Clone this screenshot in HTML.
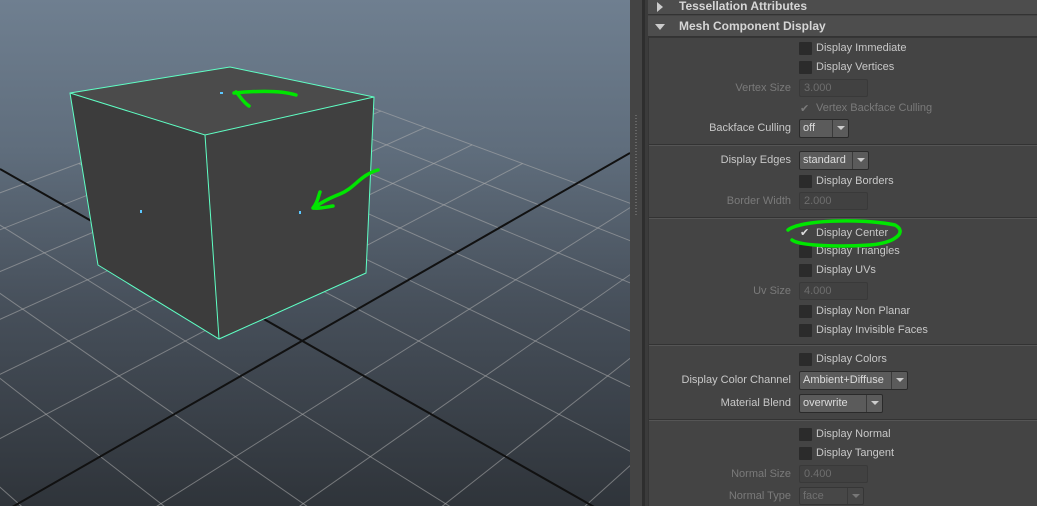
<!DOCTYPE html>
<html><head><meta charset="utf-8"><style>
*{margin:0;padding:0;box-sizing:border-box}
html,body{width:1037px;height:506px;overflow:hidden}
body{background:#444;font-family:"Liberation Sans",sans-serif;font-size:11px;position:relative}
#vp{position:absolute;left:0;top:0;width:630px;height:506px;overflow:hidden;background:linear-gradient(#6f7f90 0%,#5f6d7c 30%,#47505b 60%,#2f343a 100%)}
#strip{position:absolute;left:630px;top:0;width:12px;height:506px;background:#444}
#dl{position:absolute;left:642px;top:0;width:3px;height:506px;background:#2e2e2e}
#d2{position:absolute;left:645px;top:0;width:3px;height:506px;background:#3b3b3b}
.grip{position:absolute;left:635px;top:115px;width:2px;height:100px;background:repeating-linear-gradient(#666 0 1px,transparent 1px 3px)}
.hdr{position:absolute;left:648px;width:389px;background:#4d4d4d;border-bottom:1px solid #333;color:#d6d6d6;font-weight:bold;font-size:12px;padding-left:31px}
.frame{position:absolute;left:648px;top:37px;width:389px;height:469px;border:1px solid #353535;border-right:none;border-bottom:none;background:#444}
.sep{position:absolute;left:649px;width:388px;height:2px;border-top:1px solid #333;border-bottom:1px solid #555}
.lbl{position:absolute;right:246px;color:#c8c8c8;white-space:nowrap}
.lbl.d{color:#7a7a7a}
.cb{position:absolute;left:799px;width:13px;height:13px;background:#2b2b2b;border-radius:1px}
.ct{position:absolute;left:816px;color:#c8c8c8;white-space:nowrap}
.ct.d{color:#7a7a7a}
.inp{position:absolute;left:799px;width:69px;height:18px;border:1px solid #393939;background:#414141;color:#6e6e6e;padding:2px 4px;border-radius:2px}
.dd{position:absolute;left:799px;height:19px;border:1px solid #2a2a2a;background:#5b5b5b;color:#dcdcdc;padding:2px 3px;border-radius:2px}
.dd i{position:absolute;right:0;top:0;width:16px;height:17px;border-left:1px solid #3a3a3a}
.dd i:after{content:"";position:absolute;left:4px;top:6px;border:4px solid transparent;border-top:4px solid #ccc;border-bottom:0}
.dd.d{background:#474747;color:#707070;border-color:#363636;height:18px}
.dd.d i{height:16px}
.dd.d i:after{border-top-color:#777}
</style></head><body>
<div id="vp"><svg id="g" width="630" height="506" style="position:absolute;left:0;top:0"></svg></div>
<div id="strip"></div><div class="grip"></div><div id="dl"></div><div id="d2"></div>
<div class="hdr" style="top:0;height:15px;line-height:13px">Tessellation Attributes</div>
<div style="position:absolute;left:657px;top:2px;border:5px solid transparent;border-left:6px solid #ccc;border-right:0"></div>
<div class="hdr" style="top:16px;height:21px;line-height:21px">Mesh Component Display</div>
<div style="position:absolute;left:655px;top:24px;border:5px solid transparent;border-top:6px solid #ccc;border-bottom:0"></div>
<div class="frame"></div>
<div class="sep" style="top:144px"></div>
<div class="sep" style="top:217px"></div>
<div class="sep" style="top:344px"></div>
<div class="sep" style="top:419px"></div>

<div class="cb" style="top:42px"></div><div class="ct" style="top:42px">Display Immediate</div>
<div class="cb" style="top:61px"></div><div class="ct" style="top:61px">Display Vertices</div>
<div class="lbl d" style="top:82px">Vertex Size</div><div class="inp" style="top:79px">3.000</div>
<div class="ct d" style="left:800px;top:102px">✔</div><div class="ct d" style="top:102px">Vertex Backface Culling</div>
<div class="lbl" style="top:122px">Backface Culling</div><div class="dd" style="top:119px;width:50px">off<i></i></div>

<div class="lbl" style="top:154px">Display Edges</div><div class="dd" style="top:151px;width:70px">standard<i></i></div>
<div class="cb" style="top:175px"></div><div class="ct" style="top:175px">Display Borders</div>
<div class="lbl d" style="top:195px">Border Width</div><div class="inp" style="top:192px">2.000</div>

<div class="ct" style="left:800px;top:226px;color:#ddd">✔</div><div class="ct" style="top:227px">Display Center</div>
<div class="cb" style="top:245px"></div><div class="ct" style="top:245px">Display Triangles</div>
<div class="cb" style="top:264px"></div><div class="ct" style="top:264px">Display UVs</div>
<div class="lbl d" style="top:285px">Uv Size</div><div class="inp" style="top:282px">4.000</div>
<div class="cb" style="top:305px"></div><div class="ct" style="top:305px">Display Non Planar</div>
<div class="cb" style="top:324px"></div><div class="ct" style="top:324px">Display Invisible Faces</div>

<div class="cb" style="top:353px"></div><div class="ct" style="top:353px">Display Colors</div>
<div class="lbl" style="top:374px">Display Color Channel</div><div class="dd" style="top:371px;width:109px">Ambient+Diffuse<i></i></div>
<div class="lbl" style="top:397px">Material Blend</div><div class="dd" style="top:394px;width:84px">overwrite<i></i></div>

<div class="cb" style="top:428px"></div><div class="ct" style="top:428px">Display Normal</div>
<div class="cb" style="top:447px"></div><div class="ct" style="top:447px">Display Tangent</div>
<div class="lbl d" style="top:468px">Normal Size</div><div class="inp" style="top:465px">0.400</div>
<div class="lbl d" style="top:490px">Normal Type</div><div class="dd d" style="top:487px;width:65px">face<i></i></div>

<svg width="1037" height="506" style="position:absolute;left:0;top:0;pointer-events:none">
<path d="M788,230 C800,220 860,218 895,225 C908,232 895,243 870,245 C840,247 800,246 792,240" fill="none" stroke="#00e600" stroke-width="3.5" stroke-linecap="round"/>
</svg>
<script>
var s=document.getElementById('g'),ns='http://www.w3.org/2000/svg';
var O=[302,341],V1=[-1000,-400],V2=[1593,-400],a=0.045,b=0.045;
function P(u,v){var d=1+a*u+b*v;return[(O[0]+a*u*V1[0]+b*v*V2[0])/d,(O[1]+a*u*V1[1]+b*v*V2[1])/d];}
function L(p,q,c,w){var l=document.createElementNS(ns,'line');l.setAttribute('x1',p[0]);l.setAttribute('y1',p[1]);l.setAttribute('x2',q[0]);l.setAttribute('y2',q[1]);l.setAttribute('stroke',c);l.setAttribute('stroke-width',w);s.appendChild(l);}
var N=6,M=-20,dmin=0.25;
for(var i=M;i<=N;i++){if(i==0)continue;
 var lo=Math.max(M,(dmin-1-b*i)/a); if(lo<N) L(P(i,lo),P(i,N),'rgba(175,175,175,0.55)',1);
 var lo2=Math.max(M,(dmin-1-a*i)/b); if(lo2<N) L(P(lo2,i),P(N,i),'rgba(175,175,175,0.55)',1);}
L([0,169],[640,533],'#111',2);L([0,514],[630,153],'#111',2);
var c=document.createElementNS(ns,'g');c.innerHTML=
'<polygon points="70,93 205,135 219,339 98,265" fill="#3c3c3c"/>'+
'<polygon points="205,135 374,97 366,273 219,339" fill="#404040"/>'+
'<polygon points="70,93 230,67 374,97 205,135" fill="#4b4b4b"/>'+
'<g fill="none" stroke="#5fffc4" stroke-width="1"><polygon points="70,93 230,67 374,97 366,273 219,339 98,265"/><polyline points="70,93 205,135 374,97"/><line x1="205" y1="135" x2="219" y2="339"/></g>'+
'<rect x="220" y="92" width="3" height="2" fill="#5cc8ff"/><rect x="140" y="210" width="2" height="3" fill="#5cc8ff"/><rect x="299" y="211" width="2" height="3" fill="#5cc8ff"/>'+
'<g fill="none" stroke="#00e600" stroke-width="3.5" stroke-linecap="round" stroke-linejoin="round"><path d="M296,95 C280,90 255,91 234,93 M236,92 C240,96 243,102 249,106"/><path d="M378,170 C360,175 355,188 340,194 C330,198 320,203 314,208 M313,208 C318,202 318,197 320,192 M313,208 C320,209 326,207 333,206"/></g>';
s.appendChild(c);
</script>
</body></html>
